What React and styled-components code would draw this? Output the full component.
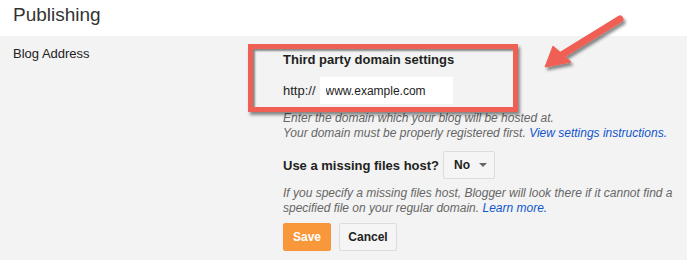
import React from "react";
import styled, { createGlobalStyle } from "styled-components";

const GlobalStyle = createGlobalStyle`
  body {
    margin: 0;
    background: #fff;
    font-family: "Liberation Sans", Arial, sans-serif;
    color: #222;
  }
`;

function App() {
  return (
    <Page>
      <GlobalStyle />
      <Title>Publishing</Title>
      <Panel>
        <Label>Blog Address</Label>
        <Content>
          <SectionTitle>Third party domain settings</SectionTitle>
          <Row>
            <span>http://</span>
            <Input value="www.example.com" readOnly />
          </Row>
          <Help>
            Enter the domain which your blog will be hosted at.
            <br />
            Your domain must be properly registered first. <a>View settings instructions.</a>
          </Help>
          <Row>
            <SectionTitle as="span">Use a missing files host?</SectionTitle>
            <Select>
              No <Caret />
            </Select>
          </Row>
          <Help>
            If you specify a missing files host, Blogger will look there if it cannot find a
            <br />
            specified file on your regular domain. <a>Learn more.</a>
          </Help>
          <Buttons>
            <Button primary>Save</Button>
            <Button>Cancel</Button>
          </Buttons>
        </Content>
        {/* annotation drawn over the screenshot */}
        <Highlight />
      </Panel>
      <Arrow width="687" height="90" viewBox="0 0 687 90">
        <defs>
          <filter id="sh" x="-20%" y="-20%" width="140%" height="140%">
            <feDropShadow dx="2" dy="3" stdDeviation="1.5" floodColor="#000" floodOpacity="0.45" />
          </filter>
        </defs>
        <g filter="url(#sh)" fill="#ef5f53" stroke="#ef5f53">
          <line x1="620" y1="19" x2="560" y2="56" strokeWidth="7" strokeLinecap="round" />
          <polygon points="545,67 553,46 571,62" strokeWidth="1" strokeLinejoin="round" />
        </g>
      </Arrow>
    </Page>
  );
}

const Page = styled.div`
  position: relative;
  width: 687px;
  height: 268px;
  overflow: hidden;
`;

const Title = styled.h1`
  margin: 0;
  height: 36px;
  padding: 4px 0 0 13px;
  box-sizing: border-box;
  font-size: 19px;
  font-weight: normal;
  color: #333;
`;

const Panel = styled.div`
  position: relative;
  display: grid;
  grid-template-columns: 283px 1fr;
  background: #f3f3f3;
  height: 224px;
  padding-top: 10px;
  box-sizing: border-box;
`;

const Label = styled.div`
  padding-left: 13px;
  font-size: 13px;
  line-height: 15px;
  color: #222;
`;

const Content = styled.div`
  display: flex;
  flex-direction: column;
  align-items: flex-start;
  padding-top: 6px;
`;

const SectionTitle = styled.div`
  font-size: 13px;
  font-weight: bold;
  line-height: 15px;
  color: #222;
`;

const Row = styled.div`
  display: flex;
  align-items: center;
  gap: 4px;
  font-size: 13px;
  color: #222;
  margin-top: 10px;
  & + div {
    margin-top: 7px;
  }
`;

const Input = styled.input`
  width: 133px;
  height: 27px;
  box-sizing: border-box;
  border: none;
  background: #fff;
  padding: 0 6px;
  font-family: "Liberation Sans", Arial, sans-serif;
  font-size: 12px;
  color: #222;
  outline: none;
`;

const Help = styled.div`
  font-size: 12px;
  font-style: italic;
  line-height: 15px;
  color: #666;
  a {
    color: #1155cc;
  }
`;

const Select = styled.div`
  display: flex;
  align-items: center;
  gap: 9px;
  width: 52px;
  height: 28px;
  box-sizing: border-box;
  padding-left: 10px;
  border: 1px solid #dcdcdc;
  border-radius: 2px;
  background: #f5f5f5;
  font-size: 12px;
  font-weight: bold;
  color: #222;
`;

const Caret = styled.span`
  width: 0;
  height: 0;
  border-left: 4px solid transparent;
  border-right: 4px solid transparent;
  border-top: 4px solid #666;
`;

const Buttons = styled.div`
  display: flex;
  gap: 8px;
  margin-top: 7px;
`;

const Button = styled.button`
  height: 28px;
  padding: 0;
  width: ${(p) => (p.primary ? "48px" : "58px")};
  border-radius: 2px;
  border: 1px solid ${(p) => (p.primary ? "#f7953a" : "#dcdcdc")};
  background: ${(p) => (p.primary ? "#f9973b" : "#f5f5f5")};
  color: ${(p) => (p.primary ? "#fff" : "#222")};
  font-family: "Liberation Sans", Arial, sans-serif;
  font-size: 12px;
  font-weight: bold;
`;

const Highlight = styled.div`
  position: absolute;
  left: 248px;
  top: 8px;
  width: 270px;
  height: 68px;
  box-sizing: border-box;
  border: 5px solid #ef5f53;
  box-shadow: 2px 3px 3px rgba(0, 0, 0, 0.45), inset 2px 2px 2px rgba(0, 0, 0, 0.45);
  pointer-events: none;
`;

const Arrow = styled.svg`
  position: absolute;
  left: 0;
  top: 0;
  pointer-events: none;
`;

export default App;
